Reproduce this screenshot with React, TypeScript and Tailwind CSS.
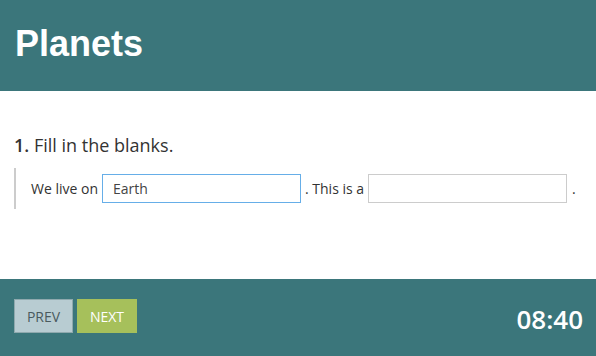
import React, { useState } from 'react';

const App: React.FC = () => {
  const [first, setFirst] = useState('Earth');
  const [second, setSecond] = useState('');

  return (
    <div className="flex flex-col h-screen w-full bg-white font-['Open_Sans',sans-serif] text-[#333]">
      {/* Header */}
      <div className="h-[91px] shrink-0 bg-[#3b767b] flex items-center px-[15px]">
        <h1 className="font-['Liberation_Sans',Arial,sans-serif] font-bold text-[36px] leading-none text-white pb-[3px]">
          Planets
        </h1>
      </div>

      {/* Question */}
      <div className="flex-1 px-[14px] pt-[43px]">
        <p className="text-[18px] leading-[22px]">
          <span className="font-semibold">1.</span> Fill in the blanks.
        </p>
        <div className="mt-[12px] border-l-2 border-[#ccc] pl-[15px] py-[6px] flex items-center text-[14px]">
          <span>We live on</span>
          <input
            value={first}
            onChange={(e) => setFirst(e.target.value)}
            className="ml-[4px] w-[199px] h-[29px] px-[10px] border border-[#66aee8] text-[14px] text-[#444] outline-none"
          />
          <span className="ml-[4px]">. This is a</span>
          <input
            value={second}
            onChange={(e) => setSecond(e.target.value)}
            className="ml-[4px] w-[199px] h-[29px] px-[10px] border border-[#ccc] text-[14px] outline-none"
          />
          <span className="ml-[5px]">.</span>
        </div>
      </div>

      {/* Footer */}
      <div className="h-[77px] shrink-0 bg-[#3b767b] flex items-start justify-between pl-[14px] pr-[13px] pt-[20px]">
        <div className="flex gap-[4px]">
          <button className="w-[59px] h-[34px] bg-[#b8ccd2] border border-[#8fa9ae] text-[#4a5a5e] text-[14px]">
            PREV
          </button>
          <button className="w-[60px] h-[34px] bg-[#a6c05b] text-white text-[14px]">
            NEXT
          </button>
        </div>
        <div className="text-white font-semibold text-[26px] leading-none mt-[7px]">08:40</div>
      </div>
    </div>
  );
};

export default App;
